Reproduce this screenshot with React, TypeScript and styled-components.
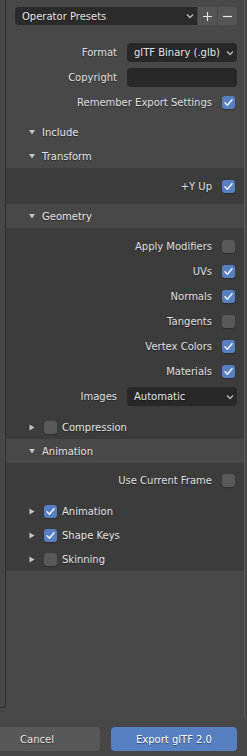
import React from 'react';
import styled, { createGlobalStyle } from 'styled-components';

const Global = createGlobalStyle`
  html, body { margin: 0; padding: 0; background: #474747; }
  body {
    font-family: "DejaVu Sans", "Liberation Sans", sans-serif;
    font-size: 10px;
    color: #e6e6e6;
  }
  * { box-sizing: border-box; }
`;

const Window = styled.div`
  width: 247px;
  height: 756px;
  display: flex;
  flex-direction: column;
  overflow: hidden;
  background: #474747;
`;

const Main = styled.div`
  flex: 0 0 718px;
  display: flex;
`;

const LeftStrip = styled.div`
  flex: 0 0 6px;
  height: 708px;
  background: #474747;
  border-right: 1px solid #2e2e2e;
  border-bottom: 1px solid #2e2e2e;
  border-bottom-right-radius: 4px;
`;

const RightStrip = styled.div`
  flex: 0 0 3px;
  background: #474747;
  border-left: 1px solid #5c5c5c;
`;

const Sidebar = styled.div`
  flex: 1;
  min-width: 0;
  background: #484848;
  display: flex;
  flex-direction: column;
  padding-top: 7px;
  text-shadow: 0 1px 1px rgba(0, 0, 0, 0.45);
`;

const PresetGroup = styled.div`
  display: flex;
  height: 18px;
  margin: 0 7px 15px 9px;
`;

const PresetField = styled.div`
  flex: 1;
  display: flex;
  align-items: center;
  justify-content: space-between;
  background: #2b2b2b;
  border-radius: 4px 0 0 4px;
  padding: 0 3px 0 7px;
  margin-right: 1px;
`;

const IconButton = styled.div<{ $last?: boolean }>`
  flex: 0 0 19px;
  display: flex;
  align-items: center;
  justify-content: center;
  background: #555555;
  border-radius: ${(p) => (p.$last ? '0 4px 4px 0' : '0')};
  margin-right: ${(p) => (p.$last ? '0' : '1px')};
`;

const PropRow = styled.div`
  display: grid;
  grid-template-columns: minmax(0, 1fr) 110px;
  column-gap: 10px;
  align-items: center;
  height: 25px;
  margin: 0 7px 0 9px;
`;

const Label = styled.span`
  text-align: right;
  color: #e0e0e0;
  white-space: nowrap;
`;

const Field = styled.div`
  height: 19px;
  display: flex;
  align-items: center;
  justify-content: space-between;
  background: #282828;
  border-radius: 4px;
  padding: 0 3px 0 7px;
`;

const CheckRow = styled.div`
  display: flex;
  justify-content: flex-end;
  align-items: center;
  gap: 10px;
  height: 25px;
  margin: 0 9px 0 9px;
`;

const Box = styled.span<{ $on?: boolean }>`
  flex: 0 0 13px;
  width: 13px;
  height: 13px;
  border-radius: 3px;
  background: ${(p) => (p.$on ? '#5680c2' : '#595959')};
  display: inline-flex;
  align-items: center;
  justify-content: center;
  box-shadow: 0 1px 1px rgba(0, 0, 0, 0.25);
`;

const Header = styled.div<{ $gapTop?: number }>`
  height: 24px;
  display: flex;
  align-items: center;
  padding-left: 23px;
  margin-top: ${(p) => p.$gapTop ?? 0}px;
  gap: 7px;
  color: #e6e6e6;
`;

const SubHeader = styled.div`
  height: 24px;
  display: flex;
  align-items: center;
  padding-left: 23px;
  color: #e6e6e6;
`;

const SubBox = styled.span`
  margin: 0 5px 0 9px;
  display: inline-flex;
`;

const Content = styled.div<{ $pt: number; $pb: number }>`
  background: #3c3c3c;
  padding-top: ${(p) => p.$pt}px;
  padding-bottom: ${(p) => p.$pb}px;
  display: flex;
  flex-direction: column;
`;

const Spacer = styled.div<{ $h: number }>`
  height: ${(p) => p.$h}px;
`;

const BottomBar = styled.div`
  flex: 1;
  display: flex;
  gap: 11px;
  padding-top: 9px;
  background: #474747;
  text-shadow: 0 1px 1px rgba(0, 0, 0, 0.45);
`;

const Button = styled.div<{ $primary?: boolean }>`
  flex: 0 0 126px;
  height: 24px;
  display: flex;
  align-items: center;
  justify-content: center;
  border-radius: 4px;
  background: ${(p) => (p.$primary ? '#5680c2' : '#585858')};
  color: ${(p) => (p.$primary ? '#ffffff' : '#e6e6e6')};
  &:first-child {
    margin-left: -26px;
  }
`;

const Chevron = () => (
  <svg width="8" height="6" viewBox="0 0 8 6">
    <polyline points="1,1.5 4,4.5 7,1.5" fill="none" stroke="#bdbdbd" strokeWidth="1.3" />
  </svg>
);

const Check = () => (
  <svg width="11" height="11" viewBox="0 0 11 11">
    <polyline points="2,5.8 4.4,8.2 9,2.8" fill="none" stroke="#f0f0f0" strokeWidth="1.6" strokeLinecap="round" strokeLinejoin="round" />
  </svg>
);

const TriDown = () => (
  <svg width="6" height="6" viewBox="0 0 6 6">
    <polygon points="0,1 6,1 3,5.5" fill="#c4c4c4" />
  </svg>
);

const TriRight = () => (
  <svg width="6" height="7" viewBox="0 0 6 7">
    <polygon points="0.5,0.5 5.5,3.5 0.5,6.5" fill="#c4c4c4" />
  </svg>
);

const Plus = () => (
  <svg width="11" height="11" viewBox="0 0 11 11">
    <path d="M5.5 1v9M1 5.5h9" stroke="#e6e6e6" strokeWidth="1.2" />
  </svg>
);

const Minus = () => (
  <svg width="11" height="11" viewBox="0 0 11 11">
    <path d="M1 5.5h9" stroke="#e6e6e6" strokeWidth="1.2" />
  </svg>
);

const CheckProp = ({ label, on }: { label: string; on?: boolean }) => (
  <CheckRow>
    <Label>{label}</Label>
    <Box $on={on}>{on && <Check />}</Box>
  </CheckRow>
);

const Sub = ({ label, on }: { label: string; on?: boolean }) => (
  <SubHeader>
    <TriRight />
    <SubBox>
      <Box $on={on}>{on && <Check />}</Box>
    </SubBox>
    <span>{label}</span>
  </SubHeader>
);

export default function App() {
  return (
    <Window>
      <Global />
      <Main>
        <LeftStrip />
        <Sidebar>
          <PresetGroup>
            <PresetField>
              <span>Operator Presets</span>
              <Chevron />
            </PresetField>
            <IconButton>
              <Plus />
            </IconButton>
            <IconButton $last>
              <Minus />
            </IconButton>
          </PresetGroup>
          <PropRow>
            <Label>Format</Label>
            <Field>
              <span>glTF Binary (.glb)</span>
              <Chevron />
            </Field>
          </PropRow>
          <PropRow>
            <Label>Copyright</Label>
            <Field />
          </PropRow>
          <CheckProp label="Remember Export Settings" on />
          <Header $gapTop={5}>
            <TriDown />
            <span>Include</span>
          </Header>
          <Header>
            <TriDown />
            <span>Transform</span>
          </Header>
          <Content $pt={6} $pb={5}>
            <CheckProp label="+Y Up" on />
          </Content>
          <Header>
            <TriDown />
            <span>Geometry</span>
          </Header>
          <Content $pt={6} $pb={0}>
            <CheckProp label="Apply Modifiers" />
            <CheckProp label="UVs" on />
            <CheckProp label="Normals" on />
            <CheckProp label="Tangents" />
            <CheckProp label="Vertex Colors" on />
            <CheckProp label="Materials" on />
            <PropRow>
              <Label>Images</Label>
              <Field>
                <span>Automatic</span>
                <Chevron />
              </Field>
            </PropRow>
            <Spacer $h={6} />
            <Sub label="Compression" />
          </Content>
          <Header>
            <TriDown />
            <span>Animation</span>
          </Header>
          <Content $pt={5} $pb={0}>
            <CheckProp label="Use Current Frame" />
            <Spacer $h={6} />
            <Sub label="Animation" on />
            <Sub label="Shape Keys" on />
            <Sub label="Skinning" />
          </Content>
        </Sidebar>
        <RightStrip />
      </Main>
      <BottomBar>
        <Button>Cancel</Button>
        <Button $primary>Export glTF 2.0</Button>
      </BottomBar>
    </Window>
  );
}
